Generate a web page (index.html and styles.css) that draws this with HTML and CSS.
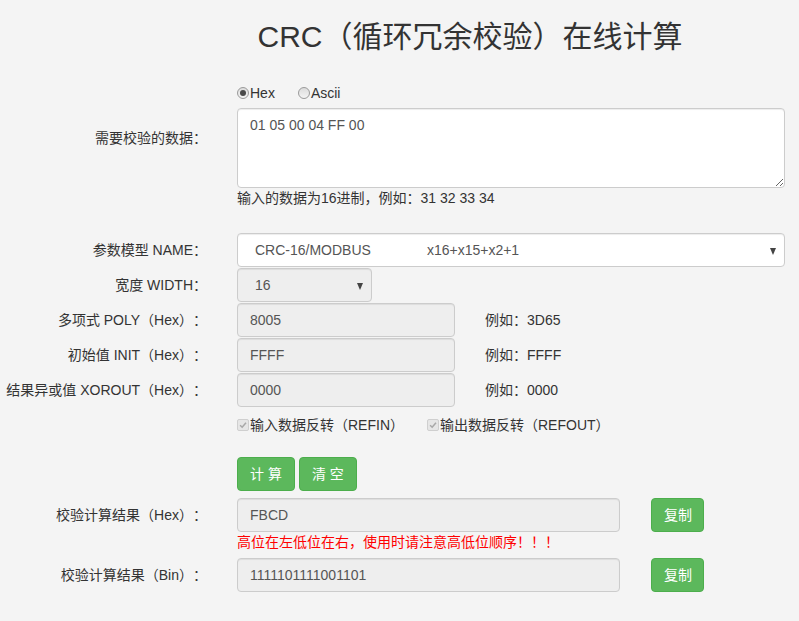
FILE: index.html
```html
<!DOCTYPE html>
<html lang="zh-CN">
<head>
<meta charset="utf-8">
<title>CRC（循环冗余校验）在线计算</title>
<link rel="stylesheet" href="styles.css">
</head>
<body>
<div class="page">
  <h1 class="title">CRC（循环冗余校验）在线计算</h1>
  <form class="form">
    <div class="row row-radio">
      <div class="label"></div>
      <div class="ctrl radios">
        <label class="radio"><span class="radio-box checked"></span>Hex</label>
        <label class="radio"><span class="radio-box"></span>Ascii</label>
      </div>
    </div>

    <div class="row row-data">
      <div class="label label-top">需要校验的数据：</div>
      <div class="ctrl ctrl-col">
        <textarea class="textarea">01 05 00 04 FF 00</textarea>
        <div class="help">输入的数据为16进制，例如：31 32 33 34</div>
      </div>
    </div>

    <div class="row row-name">
      <div class="label">参数模型 NAME：</div>
      <div class="ctrl">
        <div class="select select-full">
          <span class="opt-name">CRC-16/MODBUS</span>
          <span class="opt-poly">x16+x15+x2+1</span>
          <span class="caret"></span>
        </div>
      </div>
    </div>

    <div class="row row-field">
      <div class="label">宽度 WIDTH：</div>
      <div class="ctrl">
        <div class="select select-width disabled">
          <span class="opt-name">16</span>
          <span class="caret"></span>
        </div>
      </div>
    </div>

    <div class="row row-field">
      <div class="label">多项式 POLY（Hex）：</div>
      <div class="ctrl">
        <div class="input input-short">8005</div>
        <span class="example">例如：3D65</span>
      </div>
    </div>

    <div class="row row-field">
      <div class="label">初始值 INIT（Hex）：</div>
      <div class="ctrl">
        <div class="input input-short">FFFF</div>
        <span class="example">例如：FFFF</span>
      </div>
    </div>

    <div class="row row-field">
      <div class="label">结果异或值 XOROUT（Hex）：</div>
      <div class="ctrl">
        <div class="input input-short">0000</div>
        <span class="example">例如：0000</span>
      </div>
    </div>

    <div class="row row-check">
      <div class="label"></div>
      <div class="ctrl checks">
        <label class="check"><span class="check-box"><svg viewBox="0 0 12 12" width="12" height="12"><path d="M2.5 6.2 L5 8.6 L9.6 3.2" fill="none" stroke="#a8a8a8" stroke-width="1.8"/></svg></span>输入数据反转（REFIN）</label>
        <label class="check"><span class="check-box"><svg viewBox="0 0 12 12" width="12" height="12"><path d="M2.5 6.2 L5 8.6 L9.6 3.2" fill="none" stroke="#a8a8a8" stroke-width="1.8"/></svg></span>输出数据反转（REFOUT）</label>
      </div>
    </div>

    <div class="row row-buttons">
      <div class="label"></div>
      <div class="ctrl buttons">
        <button type="button" class="btn">计 算</button>
        <button type="button" class="btn">清 空</button>
      </div>
    </div>

    <div class="row row-result">
      <div class="label">校验计算结果（Hex）：</div>
      <div class="ctrl">
        <div class="input input-result">FBCD</div>
        <button type="button" class="btn btn-copy">复制</button>
      </div>
    </div>

    <div class="row row-warn">
      <div class="label"></div>
      <div class="ctrl warn">高位在左低位在右，使用时请注意高低位顺序！！！</div>
    </div>

    <div class="row row-result row-bin">
      <div class="label">校验计算结果（Bin）：</div>
      <div class="ctrl">
        <div class="input input-result">1111101111001101</div>
        <button type="button" class="btn btn-copy">复制</button>
      </div>
    </div>
  </form>
</div>
</body>
</html>
```

FILE: styles.css
```css
* { box-sizing: border-box; }

html, body {
  margin: 0;
  padding: 0;
  background: #f4f4f4;
}

body {
  font-family: "Liberation Sans", "Noto Sans CJK SC", sans-serif;
  font-size: 14px;
  line-height: 20px;
  color: #333;
  text-spacing-trim: space-all;
}

.page {
  width: 799px;
  height: 621px;
  overflow: hidden;
}

.title {
  margin: 0;
  padding: 20px 0 0 141px;
  text-align: center;
  font-size: 30px;
  line-height: 34px;
  font-weight: normal;
  color: #333;
}

.form {
  display: flex;
  flex-direction: column;
}

.row {
  display: flex;
  align-items: center;
}

.label {
  flex: 0 0 207px;
  text-align: right;
  white-space: nowrap;
}

.label-top {
  align-self: flex-start;
  padding-top: 20px;
}

.ctrl {
  flex: 1;
  margin-left: 30px;
  margin-right: 14px;
  display: flex;
  align-items: center;
}

.ctrl-col {
  flex-direction: column;
  align-items: stretch;
}

.row-radio { margin-top: 29px; height: 20px; }
.row-data { margin-top: 5px; align-items: flex-start; }
.row-name { margin-top: 25px; }
.row-field { margin-top: 1px; }
.row-check { margin-top: 8px; height: 20px; }
.row-buttons { margin-top: 22px; }
.row-result { margin-top: 7px; }
.row-warn { margin-top: 0; height: 20px; }
.row-bin { margin-top: 6px; }

/* radios */
.radios { gap: 23px; }
.radio {
  display: flex;
  align-items: center;
  gap: 1px;
}
.radio-box {
  width: 12px;
  height: 12px;
  border-radius: 50%;
  border: 1px solid #9a9a9a;
  background: linear-gradient(#dcdcdc, #f4f4f4);
  position: relative;
}
.radio-box.checked::after {
  content: "";
  position: absolute;
  left: 2px;
  top: 2px;
  width: 6px;
  height: 6px;
  border-radius: 50%;
  background: #4a4a4a;
}

/* textarea */
.textarea {
  display: block;
  width: 100%;
  height: 80px;
  padding: 6px 12px;
  border: 1px solid #ccc;
  border-radius: 4px;
  background: #fff;
  font-family: "Liberation Sans", "Noto Sans CJK SC", sans-serif;
  font-size: 14px;
  line-height: 20px;
  color: #555;
  box-shadow: inset 0 1px 1px rgba(0,0,0,0.075);
  resize: vertical;
}

.help {
  height: 20px;
  line-height: 20px;
  color: #333;
}

/* select look-alike */
.select {
  position: relative;
  height: 34px;
  display: flex;
  align-items: center;
  padding: 0 12px 0 17px;
  border: 1px solid #ccc;
  border-radius: 4px;
  background: #fff;
  color: #555;
  box-shadow: inset 0 1px 1px rgba(0,0,0,0.075);
}
.select-full { width: 100%; }
.select-width { width: 135px; }
.select.disabled { background: #eee; }
.opt-poly { margin-left: 56px; }
.caret {
  position: absolute;
  right: 8px;
  top: 14px;
  width: 0;
  height: 0;
  border-left: 3.5px solid transparent;
  border-right: 3.5px solid transparent;
  border-top: 7px solid #444;
}

/* inputs */
.input {
  height: 34px;
  display: flex;
  align-items: center;
  padding: 0 12px;
  border: 1px solid #ccc;
  border-radius: 4px;
  background: #eee;
  color: #555;
  box-shadow: inset 0 1px 1px rgba(0,0,0,0.075);
}
.input-short { width: 218px; }
.input-result { width: 383px; }

.example { margin-left: 30px; }

/* checkboxes */
.checks { gap: 23px; }
.check {
  display: flex;
  align-items: center;
  gap: 1px;
}
.check-box {
  width: 12px;
  height: 12px;
  border: 1px solid #cfcfcf;
  background: #e6e6e6;
  border-radius: 2px;
  display: flex;
  align-items: center;
  justify-content: center;
}
.check-box svg { display: block; }

/* buttons */
.buttons { gap: 4px; }
.btn {
  height: 34px;
  padding: 0 12px;
  border: 1px solid #4cae4c;
  border-radius: 4px;
  background: #5cb85c;
  color: #fff;
  font-family: "Liberation Sans", "Noto Sans CJK SC", sans-serif;
  font-size: 14px;
  line-height: 20px;
  white-space: nowrap;
  text-spacing-trim: space-all;
}
.btn-copy { margin-left: 31px; padding: 0 12px; width: 53px; }

.warn {
  color: #ff0000;
  line-height: 20px;
}
```
